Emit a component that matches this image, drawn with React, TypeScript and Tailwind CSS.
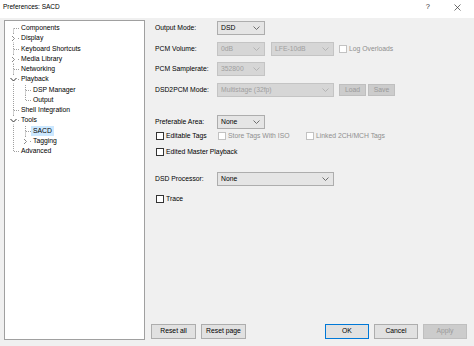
import React from "react";

const font = "font-['Liberation_Sans',Arial,sans-serif]";

type Row = {
  t: string;
  lv: 0 | 1;
  ex?: "open" | "closed";
  top: boolean;
  bottom: boolean;
  sel?: boolean;
};

const rows: Row[] = [
  { t: "Components", lv: 0, top: false, bottom: true },
  { t: "Display", lv: 0, ex: "closed", top: true, bottom: true },
  { t: "Keyboard Shortcuts", lv: 0, top: true, bottom: true },
  { t: "Media Library", lv: 0, ex: "closed", top: true, bottom: true },
  { t: "Networking", lv: 0, top: true, bottom: true },
  { t: "Playback", lv: 0, ex: "open", top: true, bottom: true },
  { t: "DSP Manager", lv: 1, top: true, bottom: true },
  { t: "Output", lv: 1, top: true, bottom: false },
  { t: "Shell Integration", lv: 0, top: true, bottom: true },
  { t: "Tools", lv: 0, ex: "open", top: true, bottom: true },
  { t: "SACD", lv: 1, top: true, bottom: true, sel: true },
  { t: "Tagging", lv: 1, ex: "closed", top: true, bottom: false },
  { t: "Advanced", lv: 0, top: true, bottom: false },
];

const dot = { stroke: "#a0a0a0", strokeWidth: 1, strokeDasharray: "1 1" };

// one 12px indent cell of the tree, drawn as svg lines
const TreeCell = ({ own, row }: { own: boolean; row: Row }) => (
  <svg width="12" height="10.25" viewBox="0 0 12 10.25" className="shrink-0">
    {!own && <line x1="6.5" y1="0" x2="6.5" y2="10.25" {...dot} />}
    {own && row.top && <line x1="6.5" y1="0" x2="6.5" y2="5.5" {...dot} />}
    {own && row.bottom && <line x1="6.5" y1="5.5" x2="6.5" y2="10.25" {...dot} />}
    {own && <line x1="7" y1="5.5" x2="12" y2="5.5" {...dot} />}
    {own && row.ex && <rect x="3" y="2" width="7" height="7" fill="#fff" />}
    {own && row.ex === "closed" && (
      <polyline points="5,3 7.5,5.5 5,8" fill="none" stroke="#8a8a8a" strokeWidth="1" />
    )}
    {own && row.ex === "open" && (
      <polyline points="3.5,4 6.5,7 9.5,4" fill="none" stroke="#333333" strokeWidth="1" />
    )}
  </svg>
);

const Tree = () => (
  <div className="w-[141px] border border-[#a0a0a0] bg-white pl-[2px] pt-[2px]">
    {rows.map((r) => (
      <div key={r.t} className="flex h-[10.25px] items-center">
        {r.lv === 1 && <TreeCell own={false} row={r} />}
        <TreeCell own row={r} />
        <span
          className={`px-[2px] leading-[10.25px] text-black ${r.sel ? "bg-[#cce8ff]" : ""}`}
        >
          {r.t}
        </span>
      </div>
    ))}
  </div>
);

const Chevron = ({ color }: { color: string }) => (
  <svg width="7" height="4" viewBox="0 0 7 4" className="shrink-0">
    <polyline points="0.5,0.5 3.5,3.5 6.5,0.5" fill="none" stroke={color} strokeWidth="0.9" />
  </svg>
);

const Combo = ({
  value,
  className,
  disabled,
}: {
  value: string;
  className: string;
  disabled?: boolean;
}) => (
  <div
    className={`flex h-[14px] items-center justify-between border pl-[3px] pr-[4px] ${className} ${
      disabled
        ? "border-[#c4c4c4] bg-[#d6d6d6] text-[#a0a0a0]"
        : "border-[#adadad] bg-[#e5e5e5] text-black"
    }`}
  >
    <span>{value}</span>
    <Chevron color={disabled ? "#b0b0b0" : "#606060"} />
  </div>
);

const Check = ({ label, disabled }: { label: string; disabled?: boolean }) => (
  <div className="flex items-center gap-[2px] pl-[1px]">
    <div
      className={`h-[8px] w-[8px] border bg-white ${
        disabled ? "border-[#c2c2c2]" : "border-[#333333]"
      }`}
    />
    <span className={disabled ? "text-[#8f8f8f]" : "text-black"}>{label}</span>
  </div>
);

const Btn = ({
  label,
  className,
  variant,
}: {
  label: string;
  className: string;
  variant?: "default" | "disabled";
}) => (
  <div
    className={`flex items-center justify-center border ${className} ${
      variant === "disabled"
        ? "border-[#bfbfbf] bg-[#cccccc] text-[#9a9a9a]"
        : variant === "default"
          ? "border-[#0078d7] bg-[#e1e1e1] text-black"
          : "border-[#adadad] bg-[#e1e1e1] text-black"
    }`}
  >
    {label}
  </div>
);

const Label = ({ text }: { text: string }) => (
  <span className="w-[62px] shrink-0 text-black">{text}</span>
);

export default function App() {
  return (
    <div className={`${font} flex h-[346px] w-[474px] flex-col bg-[#f0f0f0] text-[6.8px]`}>
      <div className="flex h-[18px] items-center justify-between bg-white pb-[4px] pl-[3px] pr-[13px]">
        <span className="text-[6.5px] text-black">Preferences: SACD</span>
        <div className="flex items-center gap-[24px]">
          <span className="text-[7.5px] text-[#333]">?</span>
          <svg width="7" height="7" viewBox="0 0 7 7">
            <path d="M0.5 0.5 L6.5 6.5 M6.5 0.5 L0.5 6.5" stroke="#333" strokeWidth="0.7" />
          </svg>
        </div>
      </div>

      <div className="flex flex-1 gap-[5px] pb-[6px] pl-[4px] pr-[7px] pt-[2px]">
        <Tree />

        <div className="flex flex-1 flex-col justify-between">
          <div className="flex flex-col pl-[5px] pt-[1px]">
            <div className="flex h-[14px] items-center">
              <Label text="Output Mode:" />
              <Combo value="DSD" className="w-[48px]" />
            </div>
            <div className="mt-[7px] flex h-[14px] items-center">
              <Label text="PCM Volume:" />
              <Combo value="0dB" className="w-[48px]" disabled />
              <Combo value="LFE-10dB" className="ml-[6px] w-[63px]" disabled />
              <div className="ml-[4px]">
                <Check label="Log Overloads" disabled />
              </div>
            </div>
            <div className="mt-[6px] flex h-[14px] items-center">
              <Label text="PCM Samplerate:" />
              <Combo value="352800" className="w-[48px]" disabled />
            </div>
            <div className="mt-[7px] flex h-[14px] items-center">
              <Label text="DSD2PCM Mode:" />
              <Combo value="Multistage (32fp)" className="w-[117px]" disabled />
              <div className="ml-[5px] flex gap-[2px]">
                <Btn label="Load" className="h-[12px] w-[27px]" variant="disabled" />
                <Btn label="Save" className="h-[12px] w-[27px]" variant="disabled" />
              </div>
            </div>
            <div className="mt-[18px] flex h-[14px] items-center">
              <Label text="Preferable Area:" />
              <Combo value="None" className="w-[48px]" />
            </div>
            <div className="mt-[2px] flex h-[10px] items-center">
              <div className="w-[62px] shrink-0">
                <Check label="Editable Tags" />
              </div>
              <div className="w-[88px] shrink-0">
                <Check label="Store Tags With ISO" disabled />
              </div>
              <Check label="Linked 2CH/MCH Tags" disabled />
            </div>
            <div className="mt-[6px] flex h-[10px] items-center">
              <Check label="Edited Master Playback" />
            </div>
            <div className="mt-[15px] flex h-[14px] items-center">
              <Label text="DSD Processor:" />
              <Combo value="None" className="w-[117px]" />
            </div>
            <div className="mt-[8px] flex h-[10px] items-center">
              <Check label="Trace" />
            </div>
          </div>

          <div className="mb-[1px] flex items-center justify-between pl-[1px]">
            <div className="flex gap-[5px]">
              <Btn label="Reset all" className="h-[15px] w-[45px]" />
              <Btn label="Reset page" className="h-[15px] w-[45px]" />
            </div>
            <div className="flex gap-[5px]">
              <Btn label="OK" className="h-[15px] w-[44px]" variant="default" />
              <Btn label="Cancel" className="h-[15px] w-[44px]" />
              <Btn label="Apply" className="h-[15px] w-[44px]" variant="disabled" />
            </div>
          </div>
        </div>
      </div>
    </div>
  );
}
